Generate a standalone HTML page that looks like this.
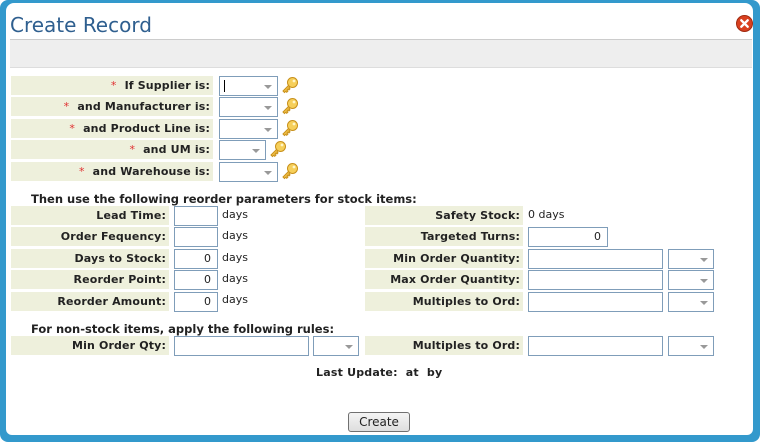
<!DOCTYPE html>
<html><head><style>
html,body{margin:0;padding:0;width:760px;height:442px;overflow:hidden;background:#fff;}
body{font-family:"DejaVu Sans","Liberation Sans",sans-serif;font-size:11px;color:#222;}
#frame{position:absolute;left:0;top:0;width:760px;height:442px;background:#3399cc;border-radius:8px;}
#inner{position:absolute;left:6px;top:3px;width:747px;height:432px;background:#fff;border-radius:8px 8px 6px 6px;}
.a{position:absolute;}
.lbl{position:absolute;background:#eef0dc;font-weight:bold;text-align:right;box-sizing:border-box;padding-right:3px;line-height:19px;height:19px;white-space:nowrap;letter-spacing:0.15px;}
.st{color:#e03030;font-weight:normal;margin-right:8px;}
.box{position:absolute;border:1px solid #7f9db9;box-sizing:border-box;background:#fff;height:20px;text-align:right;padding-right:6px;line-height:18px;}
.sel{position:absolute;border:1px solid #7f9db9;box-sizing:border-box;background:#fff;height:20px;}
.sel:after{content:"";position:absolute;right:5px;top:8px;border-left:4px solid transparent;border-right:4px solid transparent;border-top:4px solid #999;}
.txt{position:absolute;line-height:14px;white-space:nowrap;}
.b{font-weight:bold;}
.h{font-size:11.5px;}
.key{position:absolute;width:18px;height:18px;}
</style></head><body>
<div id="frame"></div>
<div id="inner"></div>
<div class="txt" style="left:10px;top:12px;font-size:20px;line-height:26px;color:#2f5f8f;">Create Record</div>
<svg class="a" style="left:736px;top:15px" width="17" height="17" viewBox="0 0 17 17"><circle cx="8.5" cy="8.5" r="8" fill="#d9401f"/><circle cx="8.5" cy="8.5" r="8" fill="none" stroke="#a02a10" stroke-width="1"/><path d="M5.3 5.3L11.7 11.7M11.7 5.3L5.3 11.7" stroke="#fff" stroke-width="2.4" stroke-linecap="round"/></svg>
<div class="a" style="left:10px;top:39px;width:742px;height:29px;background:#eeeeee;border-top:1px solid #ccc;border-bottom:1px solid #ddd;box-sizing:border-box;"></div>

<div class="lbl" style="left:11px;top:76px;width:202px;"><span class="st">*</span>If Supplier is:</div>
<div class="lbl" style="left:11px;top:97px;width:202px;"><span class="st">*</span>and Manufacturer is:</div>
<div class="lbl" style="left:11px;top:119px;width:202px;"><span class="st">*</span>and Product Line is:</div>
<div class="lbl" style="left:11px;top:140px;width:202px;"><span class="st">*</span>and UM is:</div>
<div class="lbl" style="left:11px;top:162px;width:202px;"><span class="st">*</span>and Warehouse is:</div>
<div class="sel" style="left:219px;top:76px;width:59px;"><div class="a" style="left:4px;top:3px;width:1px;height:12px;background:#000"></div></div>
<div class="sel" style="left:219px;top:97px;width:59px;"></div>
<div class="sel" style="left:219px;top:119px;width:59px;"></div>
<div class="sel" style="left:219px;top:140px;width:47px;"></div>
<div class="sel" style="left:219px;top:162px;width:59px;"></div>
<svg width="0" height="0" style="position:absolute"><defs><symbol id="k" viewBox="0 0 18 18"><path d="M7.5 9.5L2 15l1.5 1.5 1.2-1.2 1 1 1.2-1.2-1-1 1.1-1.1 1 .9 1-1-1-1 1.3-1.3" fill="#f3c34a" stroke="#c8901a" stroke-width="1"/><circle cx="11.5" cy="6.5" r="5" fill="#f6cf5a" stroke="#c8901a" stroke-width="1"/><circle cx="13" cy="5" r="1.4" fill="#fff6c8"/></symbol></defs></svg>
<svg class="key" style="left:281px;top:76px"><use href="#k"/></svg>
<svg class="key" style="left:281px;top:97px"><use href="#k"/></svg>
<svg class="key" style="left:281px;top:119px"><use href="#k"/></svg>
<svg class="key" style="left:269px;top:140px"><use href="#k"/></svg>
<svg class="key" style="left:281px;top:162px"><use href="#k"/></svg>

<div class="txt b h" style="left:31px;top:192px;">Then use the following reorder parameters for stock items:</div>

<div class="lbl" style="left:11px;top:206px;width:158px;">Lead Time:</div>
<div class="lbl" style="left:11px;top:227px;width:158px;">Order Fequency:</div>
<div class="lbl" style="left:11px;top:249px;width:158px;">Days to Stock:</div>
<div class="lbl" style="left:11px;top:270px;width:158px;">Reorder Point:</div>
<div class="lbl" style="left:11px;top:292px;width:158px;">Reorder Amount:</div>
<div class="box" style="left:174px;top:206px;width:44px;"></div>
<div class="box" style="left:174px;top:227px;width:44px;"></div>
<div class="box" style="left:174px;top:249px;width:44px;">0</div>
<div class="box" style="left:174px;top:270px;width:44px;">0</div>
<div class="box" style="left:174px;top:292px;width:44px;">0</div>
<div class="txt" style="left:222px;top:208px;">days</div>
<div class="txt" style="left:222px;top:229px;">days</div>
<div class="txt" style="left:222px;top:251px;">days</div>
<div class="txt" style="left:222px;top:272px;">days</div>
<div class="txt" style="left:222px;top:293px;">days</div>

<div class="lbl" style="left:365px;top:206px;width:158px;">Safety Stock:</div>
<div class="lbl" style="left:365px;top:227px;width:158px;">Targeted Turns:</div>
<div class="lbl" style="left:365px;top:249px;width:158px;">Min Order Quantity:</div>
<div class="lbl" style="left:365px;top:270px;width:158px;">Max Order Quantity:</div>
<div class="lbl" style="left:365px;top:292px;width:158px;">Multiples to Ord:</div>
<div class="txt" style="left:528px;top:208px;">0 days</div>
<div class="box" style="left:528px;top:227px;width:80px;">0</div>
<div class="box" style="left:528px;top:249px;width:135px;"></div>
<div class="box" style="left:528px;top:270px;width:135px;"></div>
<div class="box" style="left:528px;top:292px;width:135px;"></div>
<div class="sel" style="left:668px;top:249px;width:46px;"></div>
<div class="sel" style="left:668px;top:270px;width:46px;"></div>
<div class="sel" style="left:668px;top:292px;width:46px;"></div>

<div class="txt b h" style="left:31px;top:322px;">For non-stock items, apply the following rules:</div>
<div class="lbl" style="left:11px;top:336px;width:158px;">Min Order Qty:</div>
<div class="box" style="left:174px;top:336px;width:135px;"></div>
<div class="sel" style="left:313px;top:336px;width:46px;"></div>
<div class="lbl" style="left:365px;top:336px;width:158px;">Multiples to Ord:</div>
<div class="box" style="left:528px;top:336px;width:135px;"></div>
<div class="sel" style="left:668px;top:336px;width:46px;"></div>

<div class="txt b" style="left:316px;top:366px;letter-spacing:0.2px;">Last Update:&nbsp; at&nbsp; by</div>

<div class="a" style="left:348px;top:412px;width:62px;height:20px;border:1px solid #707070;border-radius:3px;box-sizing:border-box;background:linear-gradient(#f4f4f4,#dedede);text-align:center;line-height:18px;font-size:12px;">Create</div>
</body></html>
